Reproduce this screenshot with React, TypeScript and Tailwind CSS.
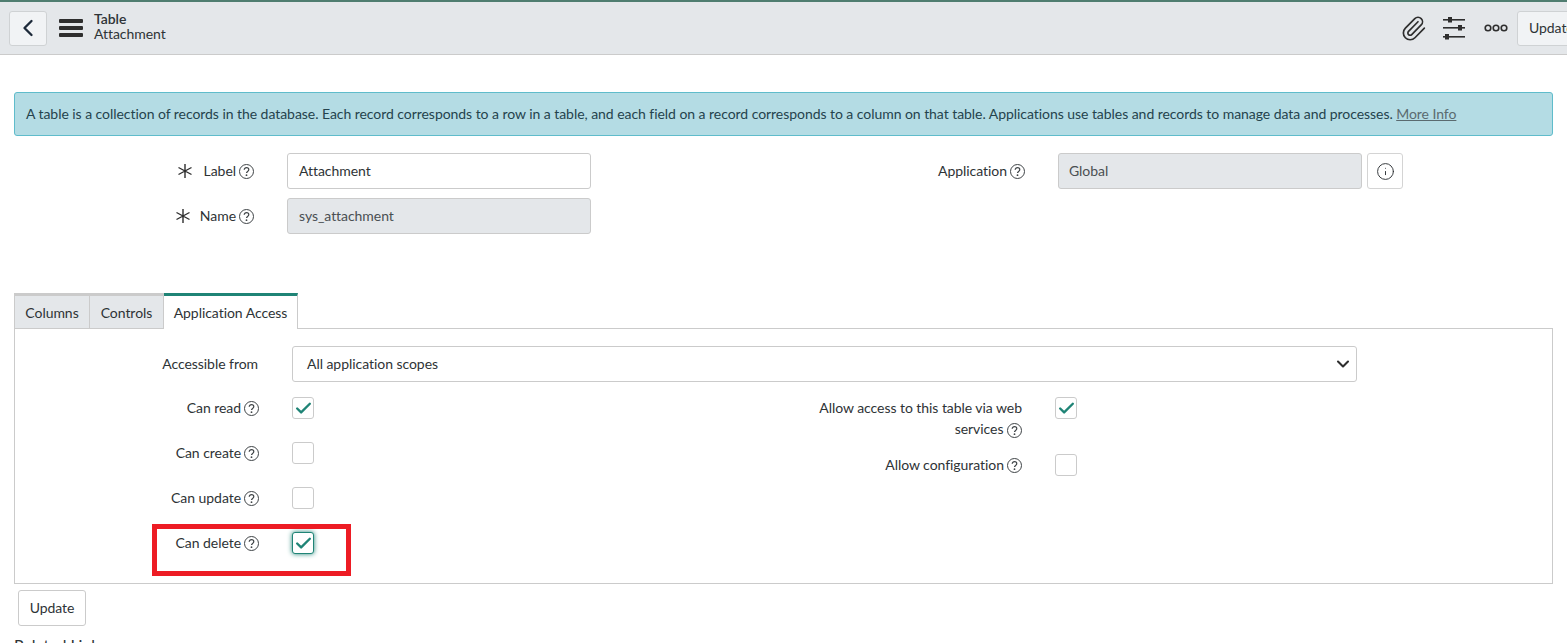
import { Check, ChevronDown, ChevronLeft, Info, Paperclip } from 'lucide-react';

const font = "font-['Lato','Liberation_Sans',sans-serif]";

function Help() {
  return (
    <svg width="15" height="15" viewBox="0 0 15 15" className="inline-block shrink-0 text-[#3f4447]" fill="none">
      <circle cx="7.5" cy="7.5" r="7" stroke="currentColor" strokeWidth="1" />
      <path d="M5.2 5.8c0-1.3 1.1-2.1 2.3-2.1s2.3.8 2.3 2c0 1.7-2.3 1.7-2.3 3.4" stroke="currentColor" strokeWidth="1.2" />
      <circle cx="7.5" cy="11.2" r=".9" fill="currentColor" />
    </svg>
  );
}

function Star() {
  return (
    <svg width="16" height="16" viewBox="0 0 16 16" className="shrink-0" stroke="#2e2e2e" strokeWidth="1.4">
      <path d="M8 1v14M1.5 4.5l13 7M14.5 4.5l-13 7" />
    </svg>
  );
}

function CheckBox({ checked, focused }: { checked?: boolean; focused?: boolean }) {
  return (
    <div
      className={`flex h-[22px] w-[22px] shrink-0 items-center justify-center rounded-[3px] border bg-white ${
        focused ? 'border-[#1f8476] shadow-[0_0_5px_#1f8476]' : 'border-[#cbcbcb]'
      }`}
    >
      {checked && <Check size={19} strokeWidth={3} className="text-[#1f8476]" />}
    </div>
  );
}

function LeftRow({ label, checked, focused }: { label: string; checked?: boolean; focused?: boolean }) {
  return (
    <div className="flex h-[45px] items-start">
      <div className="flex h-[22px] w-[244px] items-center justify-end gap-[3px]">
        <span className="pb-[1px]">{label}</span>
        <Help />
      </div>
      <div className="ml-[33px]">
        <CheckBox checked={checked} focused={focused} />
      </div>
    </div>
  );
}

export default function App() {
  return (
    <div className={`relative h-[643px] w-[1567px] overflow-hidden bg-white text-[14px] leading-[21px] tracking-[-0.05px] text-[#2e3336] ${font}`}>
      {/* header */}
      <div className="flex h-[55px] items-center border-t-2 border-b border-t-[#4f7d70] border-b-[#cbcbcb] bg-[#e4e7ea] pl-[9px]">
        <button className="flex h-[35px] w-[38px] items-center justify-center rounded-[3px] border border-[#cfd2d4] bg-[#f1f3f5]">
          <ChevronLeft size={28} strokeWidth={2} className="text-[#1d2a3a]" />
        </button>
        <div className="ml-[12px] flex w-[24px] flex-col gap-[3px]">
          <div className="h-[4px] rounded-[1px] bg-[#2e2e2e]" />
          <div className="h-[4px] rounded-[1px] bg-[#2e2e2e]" />
          <div className="h-[4px] rounded-[1px] bg-[#2e2e2e]" />
        </div>
        <div className="ml-[11px] pb-[4px] leading-[15px]">
          <div className="font-semibold">Table</div>
          <div>Attachment</div>
        </div>
        <div className="-mr-[10px] ml-auto flex items-center">
          <Paperclip size={27} strokeWidth={1.5} className="text-[#2e2e2e]" />
          <svg width="24" height="24" viewBox="0 0 24 24" className="ml-[15px] text-[#2e2e2e]" fill="currentColor">
            <rect x="1" y="3" width="22" height="1.6" />
            <rect x="6" y="1" width="4" height="5.5" />
            <rect x="1" y="11" width="22" height="1.6" />
            <rect x="16" y="9" width="4" height="5.5" />
            <rect x="1" y="20" width="22" height="1.6" />
            <rect x="3" y="18" width="4" height="5.5" />
          </svg>
          <svg width="24" height="10" viewBox="0 0 24 10" className="ml-[18px] text-[#2e2e2e]" fill="none" stroke="currentColor" strokeWidth="1.6">
            <circle cx="4" cy="5" r="2.8" />
            <circle cx="12" cy="5" r="2.8" />
            <circle cx="20" cy="5" r="2.8" />
          </svg>
          <button className="ml-[9px] h-[35px] w-[60px] shrink-0 rounded-l-[3px] border border-[#cfd2d4] bg-[#f1f3f5] pb-[2px] pl-[11px] text-left">
            Update
          </button>
        </div>
      </div>

      {/* info message */}
      <div className="mx-[14px] mt-[37px] flex h-[44px] items-center rounded-[3px] border border-[#5fbccb] bg-[#b4dce4] pb-[2px] pl-[11px] text-[#24434d]">
        <span>
          A table is a collection of records in the database. Each record corresponds to a row in a table, and each field on a record corresponds to a column on that table. Applications use tables and records to manage data and processes.{' '}
          <span className="text-[#5b6b70] underline">More Info</span>
        </span>
      </div>

      {/* form */}
      <div className="mt-[17px] flex">
        <div className="w-[922px]">
          <div className="flex h-[45px] items-start">
            <div className="flex h-[36px] w-[254px] items-center justify-end gap-[3px]">
              <Star />
              <span className="ml-[8px] pb-[2px]">Label</span>
              <Help />
            </div>
            <div className="ml-[33px] flex h-[36px] w-[304px] items-center rounded-[3px] border border-[#cbcbcb] bg-white pb-[2px] pl-[11px]">Attachment</div>
          </div>
          <div className="flex h-[45px] items-start">
            <div className="flex h-[36px] w-[254px] items-center justify-end gap-[3px]">
              <Star />
              <span className="ml-[6px] pb-[2px]">Name</span>
              <Help />
            </div>
            <div className="ml-[33px] flex h-[36px] w-[304px] items-center rounded-[3px] border border-[#cbcbcb] bg-[#e4e7ea] pb-[2px] pl-[11px] text-[#4a4f52]">sys_attachment</div>
          </div>
        </div>
        <div className="flex h-[36px] items-center">
          <div className="flex w-[103px] items-center justify-end gap-[3px]">
            <span className="pb-[2px]">Application</span>
            <Help />
          </div>
          <div className="ml-[33px] flex h-[36px] w-[304px] items-center rounded-[3px] border border-[#cbcbcb] bg-[#e4e7ea] pb-[2px] pl-[10px] text-[#4a4f52]">Global</div>
          <div className="ml-[5px] flex h-[36px] w-[36px] items-center justify-center rounded-[3px] border border-[#d4d4d4]">
            <Info size={19} strokeWidth={1.2} />
          </div>
        </div>
      </div>

      {/* tabs */}
      <div className="mx-[14px] mt-[50px]">
        <div className="flex h-[36px]">
          <div className="flex h-[36px] w-[76px] items-center justify-center border-t-[3px] border-r border-b border-l border-[#cbcbcb] bg-[#e4e7ea]">Columns</div>
          <div className="flex h-[36px] w-[74px] items-center justify-center border-t-[3px] border-r border-b border-[#cbcbcb] bg-[#e4e7ea]">Controls</div>
          <div className="flex h-[36px] w-[134px] items-center justify-center border-t-[3px] border-r border-t-[#1f8476] border-r-[#cbcbcb] bg-white">Application Access</div>
          <div className="flex-1 border-b border-[#cbcbcb]" />
        </div>
        <div className="h-[255px] border-r border-b border-l border-[#cbcbcb] pt-[17px]">
          <div className="flex h-[51px] items-start">
            <div className="flex h-[36px] w-[243px] items-center justify-end pb-[2px]">Accessible from</div>
            <div className="ml-[34px] flex h-[36px] w-[1065px] items-center justify-between rounded-[3px] border border-[#cbcbcb] bg-white pr-[3px] pl-[14px]">
              <span className="pb-[2px]">All application scopes</span>
              <ChevronDown size={20} strokeWidth={2.5} className="text-[#2e2e2e]" />
            </div>
          </div>
          <div className="flex">
            <div className="w-[800px]">
              <LeftRow label="Can read" checked />
              <LeftRow label="Can create" />
              <LeftRow label="Can update" />
              <LeftRow label="Can delete" checked focused />
            </div>
            <div>
              <div className="flex h-[57px] items-start">
                <div className="w-[207px] text-right">
                  Allow access to this table via web services <span className="align-[0px]"><Help /></span>
                </div>
                <div className="ml-[33px]">
                  <CheckBox checked />
                </div>
              </div>
              <div className="flex items-start">
                <div className="flex h-[22px] w-[207px] items-center justify-end gap-[3px]">
                  <span className="pb-[1px]">Allow configuration</span>
                  <Help />
                </div>
                <div className="ml-[33px]">
                  <CheckBox />
                </div>
              </div>
            </div>
          </div>
        </div>
      </div>

      <button className="mt-[6px] ml-[18px] block h-[36px] w-[68px] rounded-[3px] border border-[#cbcbcb] bg-white pb-[2px]">Update</button>
      <div className="mt-[9px] ml-[14px] text-[16px] leading-[20px]">Related Links</div>

      {/* red annotation drawn over the screenshot */}
      <div className="absolute top-[524px] left-[152px] h-[52px] w-[199px] border-[5px] border-[#ed1c24]" />
    </div>
  );
}
